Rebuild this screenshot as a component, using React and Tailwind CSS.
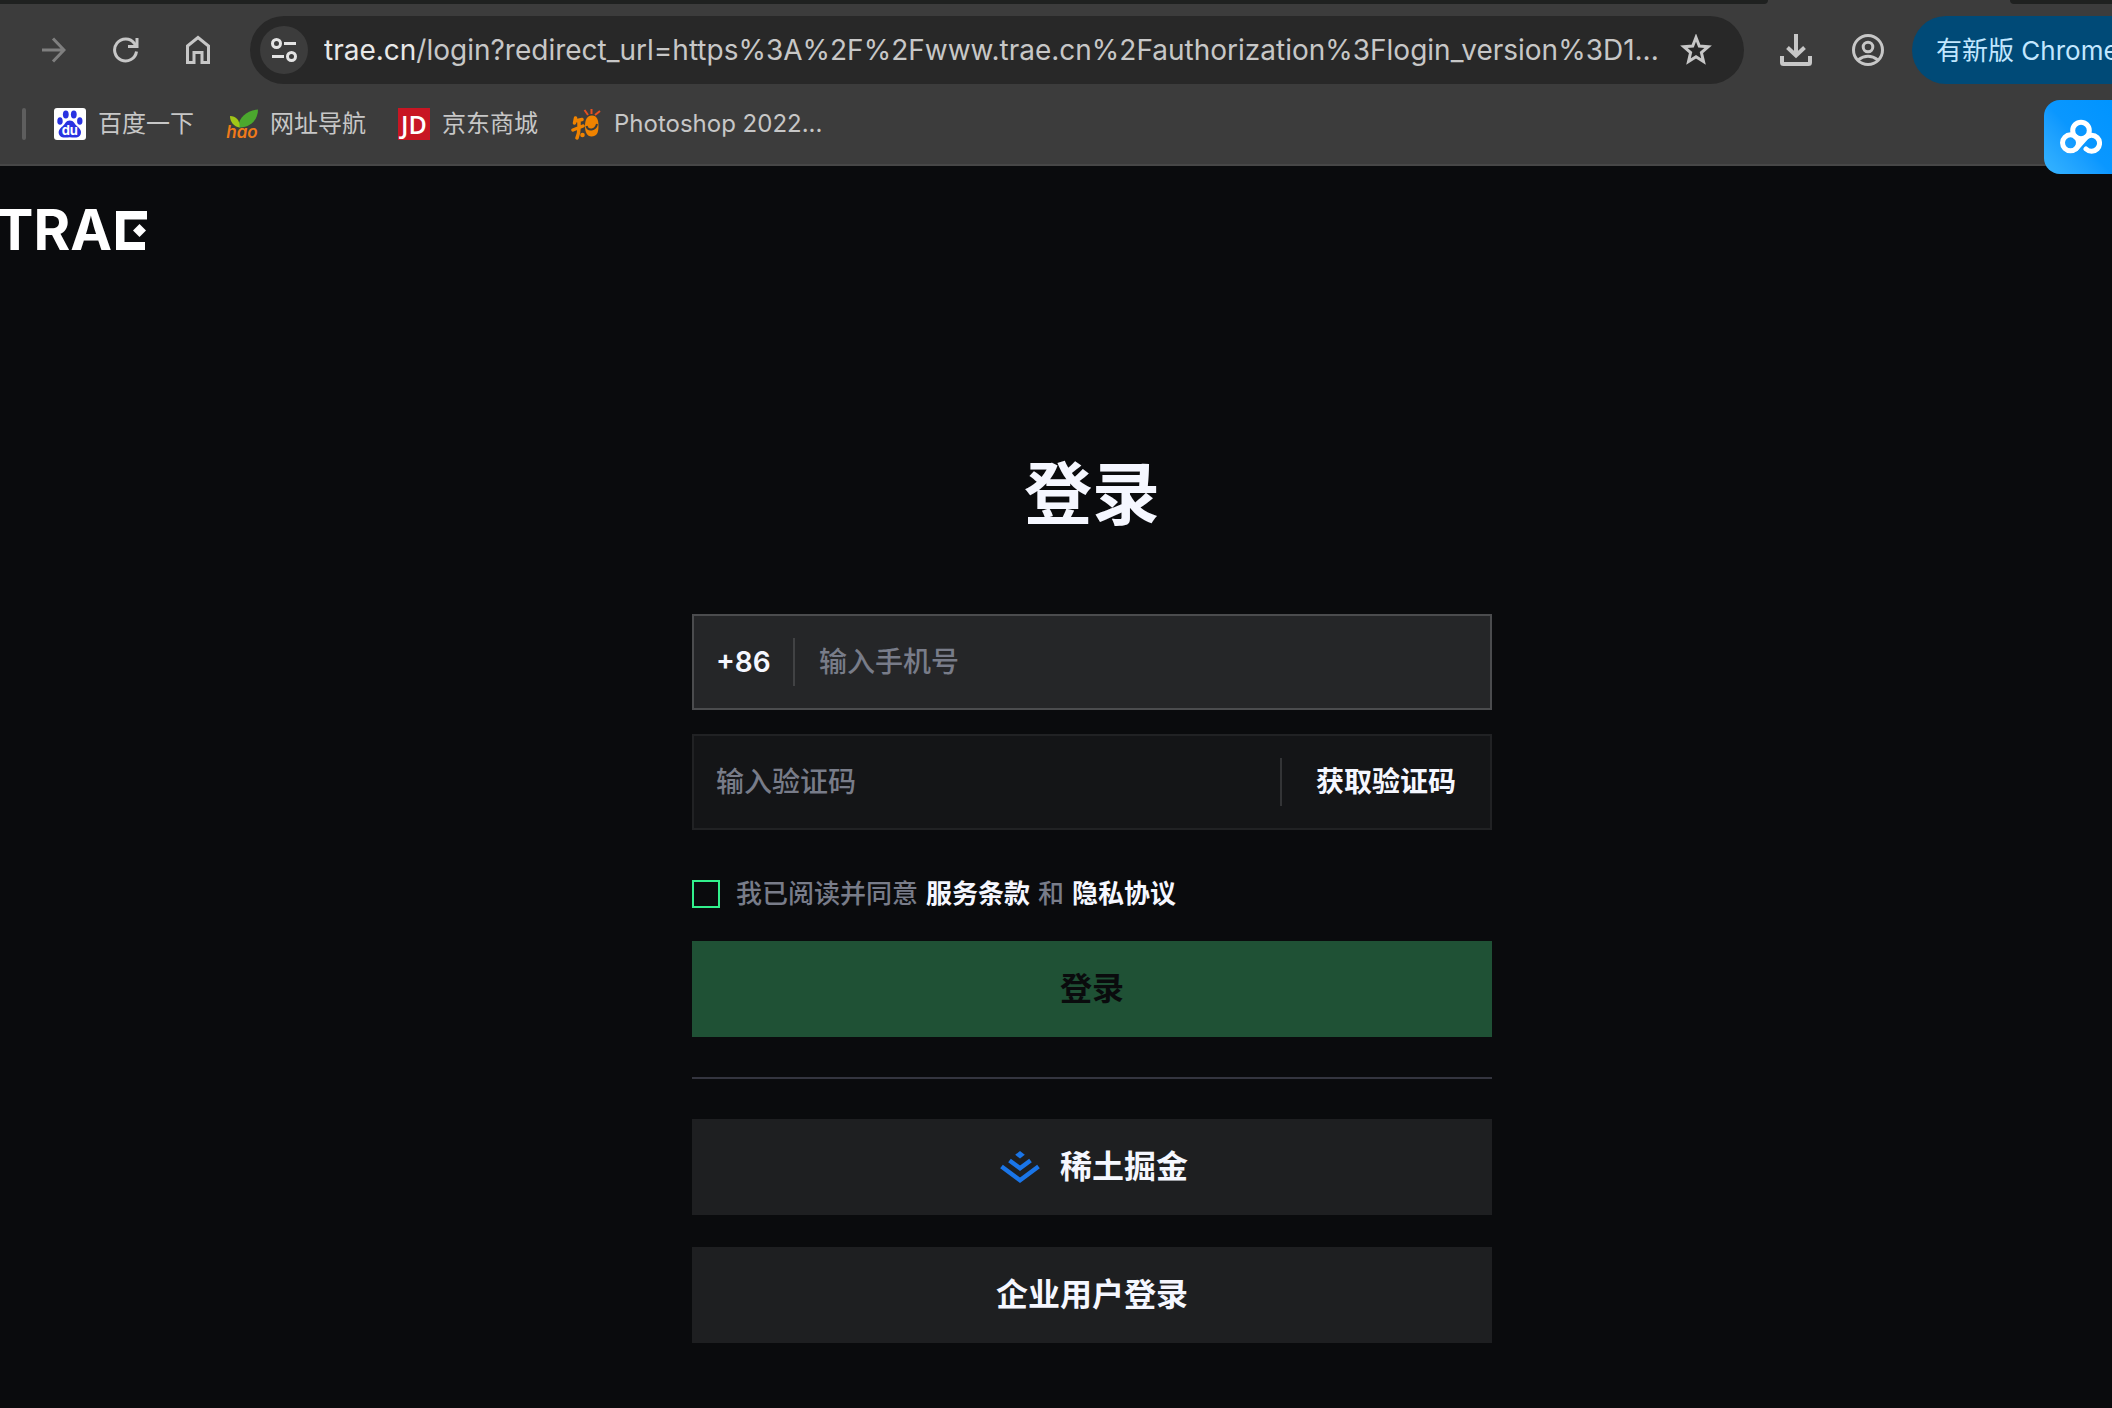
import React from "react";

function ForwardIcon() {
  return (
    <svg width="24" height="26" viewBox="0 0 24 26" fill="none" stroke="#7f7f7f" strokeWidth="3">
      <path d="M0 13H22M11 1.500L22 13L11 24.500" />
    </svg>
  );
}

function ReloadIcon() {
  return (
    <svg width="26" height="26" viewBox="0 0 26 26" fill="none" stroke="#c7c7c7" strokeWidth="3">
      <path d="M23.500 14.500A11 11 0 1 1 21.500 6.500L23.500 9" />
      <path d="M24 1V9.500H15" />
    </svg>
  );
}

function HomeIcon() {
  return (
    <svg width="26" height="30" viewBox="0 0 26 30" fill="none" stroke="#c7c7c7" strokeWidth="3">
      <path d="M2.500 11L13 2.500L23.500 11V27.500H17V17.500H9V27.500H2.500Z" />
    </svg>
  );
}

function TuneIcon() {
  return (
    <svg width="26" height="26" viewBox="0 0 26 26" fill="none" stroke="#e3e3e3" strokeWidth="3">
      <circle cx="5.500" cy="6.500" r="4" />
      <path d="M13 6.500H25M1 19.500H13" />
      <circle cx="20.500" cy="19.500" r="4" />
    </svg>
  );
}

function StarIcon() {
  return (
    <svg width="32" height="32" viewBox="0 0 32 32" fill="none" stroke="#c7c7c7" strokeWidth="3">
      <path d="M16 3.500L19.300 12L28.200 12.700L21.400 18.600L23.500 27.500L16 22.800L8.500 27.500L10.600 18.600L3.800 12.700L12.700 12Z" />
    </svg>
  );
}

function DownloadIcon() {
  return (
    <svg width="32" height="32" viewBox="0 0 32 32" fill="none" stroke="#c7c7c7">
      <path d="M16 0V21" strokeWidth="4" />
      <path d="M7.500 13.500L16 21.500L24.500 13.500" strokeWidth="4" />
      <path d="M2 22V28.500Q2 30 3.500 30H28.500Q30 30 30 28.500V22" strokeWidth="4" />
    </svg>
  );
}

function AccountIcon() {
  return (
    <svg width="32" height="32" viewBox="0 0 32 32" fill="none" stroke="#c7c7c7" strokeWidth="3">
      <circle cx="16" cy="16" r="14.500" />
      <circle cx="16" cy="13" r="4.800" />
      <path d="M6 26Q16 18.500 26 26" />
    </svg>
  );
}

function BaiduIcon() {
  return (
    <svg width="32" height="32" viewBox="0 0 32 32">
      <rect width="32" height="32" rx="3" fill="#fff" />
      <g fill="#2932e1">
        <ellipse cx="11.800" cy="6.500" rx="2.900" ry="4" />
        <ellipse cx="19.800" cy="6.500" rx="2.900" ry="4" />
        <ellipse cx="6" cy="13" rx="2.700" ry="3.800" />
        <ellipse cx="25.800" cy="13" rx="2.700" ry="3.800" />
        <path d="M15.800 12.500C20 12.500 20.500 16 23 18.200C26 20.500 28 23 26.600 26.400C25.200 29.700 21.500 29.800 15.800 29.200C10 29.800 6.500 29.700 5.100 26.400C3.800 23 5.700 20.500 8.700 18.200C11.200 16 11.700 12.500 15.800 12.500Z" />
      </g>
      <text x="15.800" y="27" textAnchor="middle" fill="#fff" fontFamily="Inter" fontWeight="700" fontSize="13">du</text>
    </svg>
  );
}

function HaoIcon() {
  return (
    <svg width="32" height="32" viewBox="0 0 32 32" className="overflow-visible">
      <path d="M13 19.500C11 12 20 2 32 1.500C32 12 24 20 13 19.500Z" fill="#4ba82e" />
      <path d="M4 8C10 8 14 12 13.500 19.500C8 18.500 4 14 4 8Z" fill="#a2c617" />
      <text x="16" y="30" textAnchor="middle" fill="#ef7a1a" fontFamily="Inter" fontStyle="italic" fontWeight="600" fontSize="17">hao</text>
    </svg>
  );
}

function JdIcon() {
  return (
    <svg width="32" height="32" viewBox="0 0 32 32">
      <rect width="32" height="32" fill="#c81623" />
      <text x="16" y="26" textAnchor="middle" fill="#fff" fontFamily="Open Sans" fontWeight="600" fontSize="25">JD</text>
    </svg>
  );
}

function ZhiIcon() {
  return (
    <svg width="32" height="32" viewBox="0 0 32 32" fill="none">
      <g stroke="#f08300" strokeWidth="3.500" strokeLinecap="round">
        <path d="M5.500 10L4.500 15M5 13L12 11.500M3 22L13 18M9 13V20Q9 25 7 30" />
      </g>
      <circle cx="12.500" cy="27" r="2.300" fill="#f08300" />
      <path d="M22 7.500C27 7.500 28.500 12 28.500 18C28.500 25 26.500 28.500 21.500 28.500C17 28.500 15 24 15 18C15 12 17 7.500 22 7.500Z" fill="#f08300" />
      <path d="M16.500 18C18 23.500 25.500 22.500 27 16" stroke="#3c3c3c" strokeWidth="2" />
      <g stroke="#e8501e" strokeWidth="2">
        <path d="M18 7L14.500 2M21.500 6V1M25 7L30 3" />
      </g>
    </svg>
  );
}

function NetdiskIcon() {
  return (
    <svg width="42" height="36" viewBox="0 0 42 36" fill="none" stroke="#fff" strokeWidth="5">
      <circle cx="21" cy="11.500" r="8.300" />
      <circle cx="10.500" cy="23.800" r="8" />
      <path d="M16 29.800L26 18.500A8 8 0 1 1 26 30" strokeLinecap="round" />
    </svg>
  );
}

function JuejinIcon() {
  return (
    <svg width="40" height="32" viewBox="0 0 40 32">
      <g fill="none" stroke="#1a75e8" strokeWidth="4.500">
        <path d="M1.500 15.500L20 29.200L38.500 15.500" />
        <path d="M9.500 9.500L20 17.200L30.500 9.500" />
      </g>
      <path d="M20 0L24.800 3.800L20 7.600L15.200 3.800Z" fill="#1a75e8" />
    </svg>
  );
}

function TraeLogo() {
  return (
    <a href="#" aria-label="TRAE" className="-ml-1 flex items-center gap-1 text-white">
      <span className="text-[56px] leading-10 font-bold">TRA</span>
      <svg width="31" height="39" viewBox="0 0 31 39" fill="#fff">
        <path d="M0 0H31V8.500H8.500V31H29V39H0Z" />
        <path d="M23.500 13L30 19.500L23.500 26L17 19.500Z" />
      </svg>
    </a>
  );
}

const bookmarks = [
  { label: "百度一下", Icon: BaiduIcon },
  { label: "网址导航", Icon: HaoIcon },
  { label: "京东商城", Icon: JdIcon },
  { label: "Photoshop 2022...", Icon: ZhiIcon },
];

function BrowserBar() {
  return (
    <header className="relative border-b-2 border-[#474747] bg-[#3c3c3c]">
      <div className="flex h-1 justify-between gap-[242px]">
        <div className="flex-1 rounded-br-xl bg-[#1f2120]" />
        <div className="w-[102px] rounded-bl-xl bg-[#1f2120]" />
      </div>
      <div className="flex items-center pt-3">
        <nav className="flex shrink-0 items-center pl-[18px]">
          <button aria-label="前进" className="flex w-[72px] justify-center"><ForwardIcon /></button>
          <button aria-label="重新加载" className="flex w-[72px] justify-center"><ReloadIcon /></button>
          <button aria-label="主页" className="flex w-[72px] justify-center"><HomeIcon /></button>
        </nav>
        <div className="ml-4 flex h-[68px] min-w-0 flex-1 items-center rounded-full bg-[#282828] pr-8 pl-[10px]">
          <button aria-label="网站信息" className="flex size-12 shrink-0 items-center justify-center rounded-full bg-[#3c3c3c]">
            <TuneIcon />
          </button>
          <div className="ml-4 min-w-0 flex-1 overflow-hidden text-[28px] leading-9 whitespace-nowrap text-[#c7c7c7]">
            <span className="text-[#e8e8e8]">trae.cn</span>
            /login?redirect_url=https%3A%2F%2Fwww.trae.cn%2Fauthorization%3Flogin_version%3D1...
          </div>
          <button aria-label="收藏" className="shrink-0"><StarIcon /></button>
        </div>
        <button aria-label="下载" className="ml-9 shrink-0"><DownloadIcon /></button>
        <button aria-label="帐号" className="ml-10 shrink-0"><AccountIcon /></button>
        <button className="ml-7 h-[68px] w-[200px] shrink-0 rounded-l-full bg-[#004a77] pl-6 text-left text-[26px] whitespace-nowrap text-[#c2e7ff]">
          有新版 Chrome
        </button>
      </div>
      <nav className="flex h-20 items-center gap-8 pl-[22px]">
        <div className="-mr-1 h-8 w-1 rounded-full bg-[#5e5e5e]" />
        {bookmarks.map(({ label, Icon }) => (
          <a key={label} href="#" className="flex items-center gap-3 text-2xl text-[#c7c7c7]">
            <Icon />
            <span>{label}</span>
          </a>
        ))}
      </nav>
      <button
        aria-label="网盘"
        className="absolute top-[100px] right-0 flex h-[74px] w-[68px] items-center rounded-l-2xl bg-linear-to-tr from-[#36b4ff] via-[#0a97ff] to-[#0094ff] pl-4"
      >
        <NetdiskIcon />
      </button>
    </header>
  );
}

function LoginForm() {
  return (
    <form className="flex w-[800px] flex-col text-[#f5f7ff]" onSubmit={(e) => e.preventDefault()}>
      <h1 className="text-center text-[68px] leading-[80px] font-bold">登录</h1>
      <div className="mt-20 flex h-24 items-center border-2 border-[#4b4c4e] bg-[#252628] pl-[22px]">
        <span className="w-[77px] text-[28px] font-semibold">+86</span>
        <div className="h-12 w-0.5 bg-[#414244]" />
        <input
          type="tel"
          aria-label="手机号"
          placeholder="输入手机号"
          className="min-w-0 flex-1 bg-transparent pl-6 text-[28px] font-medium outline-none placeholder:text-[#787c89]"
        />
      </div>
      <div className="mt-6 flex h-24 items-center border-2 border-[#212224] bg-[#141517] pl-[22px]">
        <input
          type="text"
          aria-label="验证码"
          placeholder="输入验证码"
          className="min-w-0 flex-1 bg-transparent text-[28px] font-medium outline-none placeholder:text-[#787c89]"
        />
        <div className="h-12 w-0.5 bg-[#333436]" />
        <button type="button" className="h-full w-[208px] text-[28px] font-bold">获取验证码</button>
      </div>
      <div className="mt-11 flex items-center text-[26px] leading-10 font-medium text-[#787c89]">
        <input
          id="agree"
          type="checkbox"
          className="size-7 appearance-none border-2 border-[#32f08c] bg-transparent checked:bg-[#32f08c]"
        />
        <label htmlFor="agree" className="pl-4">我已阅读并同意</label>
        <a href="#" className="pl-2 font-bold text-[#f5f7ff]">服务条款</a>
        <span className="pl-2">和</span>
        <a href="#" className="pl-2 font-bold text-[#f5f7ff]">隐私协议</a>
      </div>
      <button type="submit" className="mt-[27px] h-24 bg-[#1f5135] text-[32px] font-bold text-[#0a0b0d]">登录</button>
      <hr className="mt-10 border-t-2 border-[#34353f]" />
      <button type="button" className="mt-10 flex h-24 items-center justify-center gap-5 bg-[#1e1f21] pl-1 text-[32px] font-bold">
        <JuejinIcon />
        稀土掘金
      </button>
      <button type="button" className="mt-8 h-24 bg-[#1e1f21] text-[32px] font-bold">企业用户登录</button>
    </form>
  );
}

export default function App() {
  return (
    <div className="min-h-screen overflow-hidden bg-[#0a0b0d] font-[Inter,'Noto_Sans_CJK_SC',sans-serif]">
      <BrowserBar />
      <div className="pt-11">
        <TraeLogo />
      </div>
      <main className="flex justify-center pt-[204px] pb-10 pl-[72px]">
        <LoginForm />
      </main>
    </div>
  );
}
